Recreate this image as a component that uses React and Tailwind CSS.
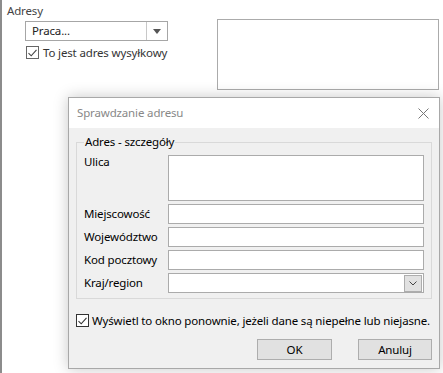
import React from "react";

const Check = ({ color = "#333" }) => (
    <svg width="9" height="8" viewBox="0 0 9 8" fill="none">
        <path d="M0.5 4.2 L3.2 6.8 L8.5 0.8" stroke={color} strokeWidth="1.1" />
    </svg>
);

const fields = ["Miejscowość", "Województwo", "Kod pocztowy"];

const App = () => {
    return (
        <div className="relative w-[443px] h-[373px] bg-white border-l-2 border-[#8c8c8c] overflow-hidden font-['Noto_Sans',sans-serif] text-[11.5px] tracking-[-0.15px] text-black whitespace-nowrap">
            {/* Background form */}
            <div className="pl-[5px] pt-[3px] leading-[16px] text-[#444]">Adresy</div>
            <div className="flex">
                <div className="ml-[23px] mt-[2px]">
                    <div className="flex w-[143px] h-[20px] border border-[#a6a6a6] bg-white">
                        <div className="flex-1 pl-[6px] leading-[18px] text-[#222]">Praca...</div>
                        <div className="w-[21px] border-l border-[#c8c8c8] flex items-center justify-center">
                            <div className="w-0 h-0 border-l-[4px] border-r-[4px] border-t-[5px] border-l-transparent border-r-transparent border-t-[#555]"></div>
                        </div>
                    </div>
                    <div className="flex items-center mt-[5px] ml-[1px]">
                        <div className="w-[13px] h-[13px] border border-[#666] bg-white flex items-center justify-center">
                            <Check color="#444" />
                        </div>
                        <span className="ml-[4px] leading-[13px] text-[#333]">To jest adres wysyłkowy</span>
                    </div>
                </div>
                <div className="ml-[49px] w-[222px] h-[71px] border border-[#ababab] bg-white"></div>
            </div>

            {/* Dialog window */}
            <div className="absolute left-[66px] top-[97px] w-[372px] h-[272px] border border-[#a8a8a8] bg-[#f0f0f0] shadow-[0_0_14px_rgba(0,0,0,0.22)] flex flex-col">
                <div className="h-[30px] bg-white flex items-center justify-between pl-[8px] pr-[10px]">
                    <span className="text-[#888]">Sprawdzanie adresu</span>
                    <svg width="11" height="11" viewBox="0 0 11 11">
                        <path d="M0.5 0.5 L10.5 10.5 M10.5 0.5 L0.5 10.5" stroke="#777" strokeWidth="1" />
                    </svg>
                </div>
                <div className="flex-1 px-[7px] pt-[6px] flex flex-col">
                    <fieldset className="border border-[#d9d9d9] px-[7px] pb-[5px]">
                        <legend className="px-[1px] leading-[16px]">Adres - szczegóły</legend>
                        <div className="flex flex-col gap-[3px] mt-[5px]">
                            <div className="flex items-start">
                                <span className="w-[84px] leading-[14px]">Ulica</span>
                                <div className="flex-1 h-[46px] border border-[#ababab] bg-white"></div>
                            </div>
                            {fields.map((f) => (
                                <div key={f} className="flex items-center">
                                    <span className="w-[84px]">{f}</span>
                                    <div className="flex-1 h-[20px] border border-[#ababab] bg-white"></div>
                                </div>
                            ))}
                            <div className="flex items-center">
                                <span className="w-[84px]">Kraj/region</span>
                                <div className="flex-1 h-[20px] border border-[#ababab] bg-white flex justify-end items-center pr-[1px]">
                                    <div className="w-[18px] h-[17px] bg-[#e1e1e1] border border-[#adadad] flex items-center justify-center">
                                        <svg width="8" height="5" viewBox="0 0 8 5">
                                            <path d="M0.5 0.5 L4 4 L7.5 0.5" stroke="#444" strokeWidth="1" fill="none" />
                                        </svg>
                                    </div>
                                </div>
                            </div>
                        </div>
                    </fieldset>
                    <div className="flex items-center mt-[15px]">
                        <div className="w-[13px] h-[13px] border border-[#333] bg-white flex items-center justify-center">
                            <Check color="#333" />
                        </div>
                        <span className="ml-[3px] leading-[13px]">Wyświetl to okno ponownie, jeżeli dane są niepełne lub niejasne.</span>
                    </div>
                    <div className="flex justify-end gap-[26px] mt-[12px]">
                        <button className="w-[75px] h-[21px] bg-[#e1e1e1] border border-[#adadad] leading-[19px]">OK</button>
                        <button className="w-[74px] h-[21px] bg-[#e1e1e1] border border-[#adadad] leading-[19px]">Anuluj</button>
                    </div>
                </div>
            </div>
        </div>
    );
};

export default App;
